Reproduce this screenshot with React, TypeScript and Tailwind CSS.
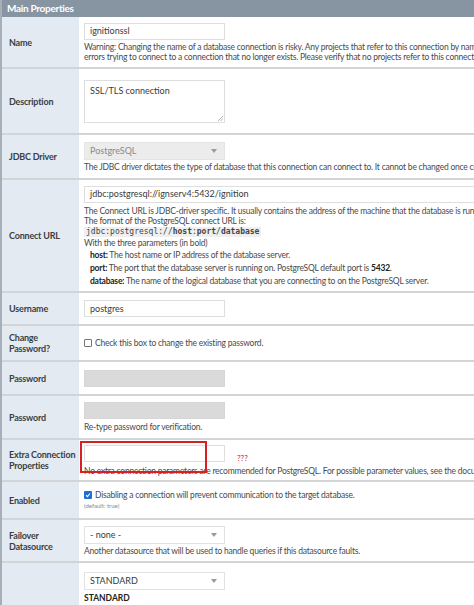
import React from "react";

const font = { fontFamily: "Lato, 'Noto Sans', sans-serif" };

function Label({ children }: { children: React.ReactNode }) {
  return (
    <div className="w-[77px] shrink-0 self-stretch flex items-center bg-[#e3eaf1] pl-[7px] text-[9px] leading-[11px] font-bold tracking-[-0.2px] whitespace-nowrap text-[#3a3f44]">
      {children}
    </div>
  );
}

function Row({ h, label, children }: { h: string; label: React.ReactNode; children?: React.ReactNode }) {
  return (
    <div className={`flex border-b-2 border-[#d2d4d6] ${h}`}>
      <Label>{label}</Label>
      <div className="flex-1 min-w-0 flex flex-col justify-center pl-[5px] overflow-hidden">{children}</div>
    </div>
  );
}

function Help({ children, className = "" }: { children: React.ReactNode; className?: string }) {
  return (
    <div className={`text-[8.5px] leading-[10px] tracking-[-0.22px] text-[#4a4a4a] whitespace-nowrap ${className}`}>
      {children}
    </div>
  );
}

function TextBox({ value = "", gray = false, wide = false }: { value?: string; gray?: boolean; wide?: boolean }) {
  return (
    <div
      className={`h-[17px] shrink-0 ${wide ? "w-[420px]" : "w-[141px]"} border ${gray ? "bg-[#dadada] border-[#d6d6d6]" : "bg-white border-[#dedede]"} flex items-center pl-[5px] text-[9px] text-[#3a3a3a]`}
    >
      {value}
    </div>
  );
}

function Select({ value, disabled = false }: { value: string; disabled?: boolean }) {
  return (
    <div
      className={`h-[18px] w-[141px] border flex items-center justify-between pl-[5px] pr-[7px] text-[9px] ${disabled ? "bg-[#ececec] border-[#e4e4e4] text-[#8a8a8a]" : "bg-white border-[#e2e2e2] text-[#3a3a3a]"}`}
    >
      <span>{value}</span>
      <svg width="6" height="4" viewBox="0 0 6 4">
        <path d="M0 0 L6 0 L3 4 Z" fill="#9a9a9a" />
      </svg>
    </div>
  );
}

export default function App() {
  return (
    <div className="w-[474px] h-[605px] overflow-hidden bg-white border-l-2 border-[#a7b0b9]" style={font}>
      <div className="h-[17px] bg-[#8795a2] flex items-center pl-[5px] text-[10px] font-bold tracking-[-0.3px] text-white">
        Main Properties
      </div>

      <Row h="h-[52px]" label="Name">
        <TextBox value="ignitionssl" />
        <Help className="mt-[2px]">
          Warning: Changing the name of a database connection is risky. Any projects that refer to this connection by name
        </Help>
        <Help>errors trying to connect to a connection that no longer exists. Please verify that no projects refer to this connection</Help>
      </Row>

      <Row h="h-[66px]" label="Description">
        <div className="relative h-[43px] w-[141px] border border-[#dedede] bg-white pl-[5px] pt-[3px] text-[9px] text-[#3a3a3a]">
          SSL/TLS connection
          <svg className="absolute right-[1px] bottom-[1px]" width="5" height="5" viewBox="0 0 5 5">
            <path d="M5 0 L0 5 M5 2.5 L2.5 5" stroke="#999" strokeWidth="0.7" />
          </svg>
        </div>
      </Row>

      <Row h="h-[45px]" label="JDBC Driver">
        <Select value="PostgreSQL" disabled />
        <Help className="mt-[2px]">
          The JDBC driver dictates the type of database that this connection can connect to. It cannot be changed once created.
        </Help>
      </Row>

      <Row h="h-[113px]" label="Connect URL">
        <TextBox value="jdbc:postgresql://ignserv4:5432/ignition" wide />
        <Help className="mt-[3px]">
          The Connect URL is JDBC-driver specific. It usually contains the address of the machine that the database is running on.
        </Help>
        <Help>The format of the PostgreSQL connect URL is:</Help>
        <div
          className="my-[1px] self-start bg-[#efefef] px-[2px] text-[8px] leading-[10px] text-[#444]"
          style={{ fontFamily: "'DejaVu Sans Mono', monospace" }}
        >
          jdbc:postgresql://<b>host</b>:<b>port</b>/<b>database</b>
        </div>
        <Help>With the three parameters (in bold)</Help>
        <div className="pl-[6px] flex flex-col gap-[3px] mt-[2px]">
          <Help>
            <b className="text-[#222]">host:</b> The host name or IP address of the database server.
          </Help>
          <Help>
            <b className="text-[#222]">port:</b> The port that the database server is running on. PostgreSQL default port is{" "}
            <b className="text-[#222]">5432</b>.
          </Help>
          <Help>
            <b className="text-[#222]">database:</b> The name of the logical database that you are connecting to on the PostgreSQL server.
          </Help>
        </div>
      </Row>

      <Row h="h-[33px]" label="Username">
        <TextBox value="postgres" />
      </Row>

      <Row
        h="h-[36px]"
        label={
          <span>
            Change
            <br />
            Password?
          </span>
        }
      >
        <div className="flex items-center gap-[3px]">
          <div className="w-[8px] h-[8px] border border-[#767676] rounded-[1px] bg-white" />
          <Help>Check this box to change the existing password.</Help>
        </div>
      </Row>

      <Row h="h-[34px]" label="Password">
        <TextBox gray />
      </Row>

      <Row h="h-[44px]" label="Password">
        <TextBox gray />
        <Help className="mt-[3px]">Re-type password for verification.</Help>
      </Row>

      <Row
        h="h-[42px]"
        label={
          <span>
            Extra Connection
            <br />
            Properties
          </span>
        }
      >
        <div className="relative">
          <div className="flex items-end gap-[12px]">
            <TextBox />
            <span className="text-[8px] text-[#d22] leading-[10px] mb-[-1px]">???</span>
          </div>
          <Help className="mt-[4px]">
            No extra connection parameters are recommended for PostgreSQL. For possible parameter values, see the documentation
          </Help>
          <div className="absolute left-[-4px] top-[-4px] w-[127px] h-[32px] border-2 border-[#d81f26]" />
        </div>
      </Row>

      <Row h="h-[38px]" label="Enabled">
        <div className="flex items-center gap-[3px]">
          <div className="w-[8px] h-[8px] rounded-[1px] bg-[#1f6fd1] flex items-center justify-center">
            <svg width="6" height="6" viewBox="0 0 6 6">
              <path d="M1 3.2 L2.4 4.6 L5 1.5" stroke="white" strokeWidth="1.1" fill="none" />
            </svg>
          </div>
          <Help>Disabling a connection will prevent communication to the target database.</Help>
        </div>
        <div className="text-[6px] leading-[8px] text-[#888] mt-[2px]">(default: true)</div>
      </Row>

      <Row
        h="h-[43px]"
        label={
          <span>
            Failover
            <br />
            Datasource
          </span>
        }
      >
        <Select value="- none -" />
        <Help className="mt-[2px]">Another datasource that will be used to handle queries if this datasource faults.</Help>
      </Row>

      <Row h="h-[50px]" label="">
        <Select value="STANDARD" />
        <div className="mt-[3px] text-[8.5px] leading-[10px] font-bold text-[#222]">STANDARD</div>
      </Row>
    </div>
  );
}
